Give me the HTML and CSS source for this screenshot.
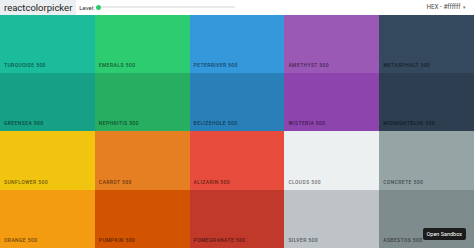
FILE: index.html
```html
<!DOCTYPE html>
<html lang="en">
<head>
    <meta charset="UTF-8">
    <title>reactcolorpicker</title>
    <link rel="stylesheet" href="styles.css">
</head>
<body>
<div class="palette">
    <header class="navbar">
        <div class="logo">reactcolorpicker</div>
        <div class="slider-box">
            <span class="level">Level:</span>
            <div class="slider">
                <span class="handle"></span>
            </div>
        </div>
        <div class="format">HEX - #ffffff <span class="caret">&#9662;</span></div>
    </header>
    <div class="colors">
        <div class="box" style="background:#1abc9c"><span class="name">turquoise 500</span></div>
        <div class="box" style="background:#2ecc71"><span class="name">emerald 500</span></div>
        <div class="box" style="background:#3498db"><span class="name">peterriver 500</span></div>
        <div class="box" style="background:#9b59b6"><span class="name">amethyst 500</span></div>
        <div class="box" style="background:#34495e"><span class="name">wetasphalt 500</span></div>
        <div class="box" style="background:#16a085"><span class="name">greensea 500</span></div>
        <div class="box" style="background:#27ae60"><span class="name">nephritis 500</span></div>
        <div class="box" style="background:#2980b9"><span class="name">belizehole 500</span></div>
        <div class="box" style="background:#8e44ad"><span class="name">wisteria 500</span></div>
        <div class="box" style="background:#2c3e50"><span class="name">midnightblue 500</span></div>
        <div class="box" style="background:#f1c40f"><span class="name">sunflower 500</span></div>
        <div class="box" style="background:#e67e22"><span class="name">carrot 500</span></div>
        <div class="box" style="background:#e74c3c"><span class="name">alizarin 500</span></div>
        <div class="box" style="background:#ecf0f1"><span class="name">clouds 500</span></div>
        <div class="box" style="background:#95a5a6"><span class="name">concrete 500</span></div>
        <div class="box" style="background:#f39c12"><span class="name">orange 500</span></div>
        <div class="box" style="background:#d35400"><span class="name">pumpkin 500</span></div>
        <div class="box" style="background:#c0392b"><span class="name">pomegranate 500</span></div>
        <div class="box" style="background:#bdc3c7"><span class="name">silver 500</span></div>
        <div class="box" style="background:#7f8c8d"><span class="name">asbestos 500</span></div>
    </div>
</div>
<a class="sandbox" href="#">Open Sandbox</a>
</body>
</html>
```

FILE: styles.css
```css
html, body{
    margin: 0;
    padding: 0;
    height: 100%;
    overflow: hidden;
}
body{
    font-family: Roboto, "Liberation Sans", sans-serif;
}
.palette{
    height: 100vh;
    display: flex;
    flex-direction: column;
}
.navbar{
    height: 6vh;
    display: flex;
    align-items: center;
    background: #fff;
}
.logo{
    height: 100%;
    display: flex;
    align-items: center;
    padding: 0 4px 0 4px;
    background: #eceff1;
    color: #222;
    font-size: 9.5px;
}
.slider-box{
    display: flex;
    align-items: center;
    margin-left: 3px;
}
.level{
    font-size: 6px;
    color: #333;
    margin-right: 2px;
}
.slider{
    width: 138px;
    height: 2px;
    border-radius: 1px;
    background: #e9e9e9;
    position: relative;
}
.handle{
    position: absolute;
    left: -1px;
    top: -1.5px;
    width: 5px;
    height: 5px;
    border-radius: 50%;
    background: #2ecc71;
}
.format{
    margin-left: auto;
    margin-right: 8px;
    font-size: 6.3px;
    color: #444;
}
.caret{
    font-size: 5px;
    color: #777;
    margin-left: 1px;
}
.colors{
    flex: 1;
    display: grid;
    grid-template-columns: repeat(5, 1fr);
    grid-template-rows: repeat(4, 1fr);
}
.box{
    display: flex;
    align-items: flex-end;
    padding: 0 0 5px 4px;
}
.name{
    font-size: 5px;
    font-weight: 500;
    text-transform: uppercase;
    letter-spacing: 0.4px;
    color: rgba(0, 0, 0, 0.6);
}
.sandbox{
    position: fixed;
    right: 8px;
    bottom: 8px;
    padding: 3px 4px;
    border-radius: 2px;
    background: #1b1b1b;
    color: #fff;
    font-size: 5.5px;
    text-decoration: none;
}
```
